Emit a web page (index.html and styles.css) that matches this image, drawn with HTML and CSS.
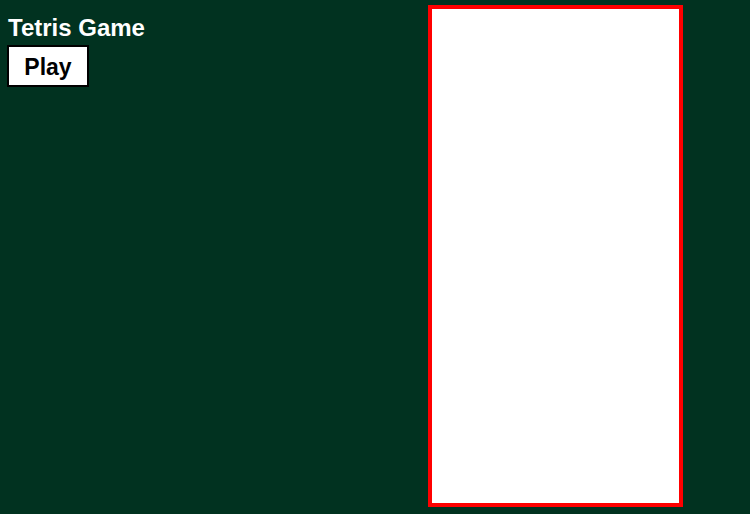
FILE: index.html
```html
<!DOCTYPE html>
<html>
<head>
<meta charset="utf-8">
<link rel="stylesheet" href="styles.css">
</head>
<body>
<div class="app">
  <div class="side">
    <h2 class="title">Tetris Game</h2>
    <button class="play">Play</button>
  </div>
  <div class="board"></div>
</div>
</body>
</html>
```

FILE: styles.css
```css
html, body {
  margin: 0;
  padding: 0;
  background: #013220;
  height: 100%;
  overflow: hidden;
}
.app {
  display: flex;
  align-items: flex-start;
  font-family: "Liberation Sans", Arial, sans-serif;
}
.side {
  flex: 0 0 428px;
  box-sizing: border-box;
  padding-left: 7px;
  display: flex;
  flex-direction: column;
  align-items: flex-start;
}
.title {
  margin: 14px 0 4px 1px;
  font-size: 24px;
  font-weight: bold;
  color: #ffffff;
  line-height: 28px;
}
.play {
  box-sizing: border-box;
  width: 82px;
  height: 42px;
  background: #ffffff;
  border: 2px solid #000000;
  font-family: "Liberation Sans", Arial, sans-serif;
  font-size: 23px;
  font-weight: bold;
  color: #000000;
  padding: 2px 0 0 0;
  margin: -1px 0 0 0;
}
.board {
  margin-top: 5px;
  box-sizing: border-box;
  width: 255px;
  height: 502px;
  border: 4px solid #ff0000;
  background: #ffffff;
}
```
